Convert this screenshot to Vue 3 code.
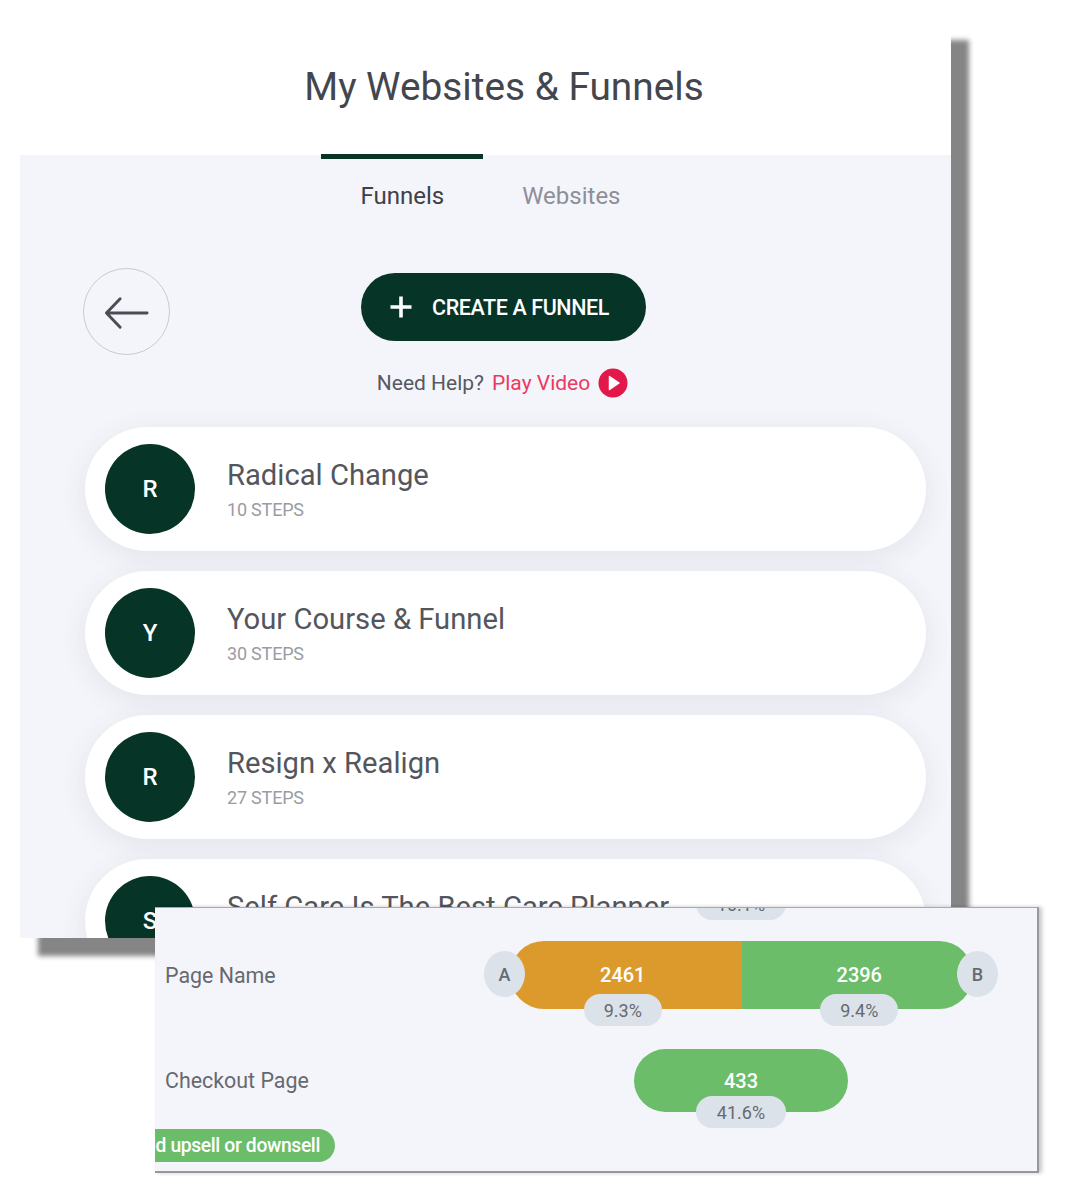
<script setup>
const funnels = [
  { letter: 'R', name: 'Radical Change', steps: '10 STEPS' },
  { letter: 'Y', name: 'Your Course & Funnel', steps: '30 STEPS' },
  { letter: 'R', name: 'Resign x Realign', steps: '27 STEPS' },
  { letter: 'S', name: 'Self Care Is The Best Care Planner', steps: '12 STEPS' }
]
</script>

<template>
  <div class="page">
    <section class="window">
      <header class="head"><h1>My Websites &amp; Funnels</h1></header>
      <div class="body">
        <nav class="tabs">
          <a class="tab active">Funnels</a>
          <a class="tab">Websites</a>
        </nav>
        <div class="toolbar">
          <button class="back" aria-label="Back">
            <svg width="45" height="34" viewBox="0 0 46 34" fill="none" stroke="#4a4d55" stroke-width="3" stroke-linecap="round" stroke-linejoin="round">
              <path d="M2.500 17H44M16.500 2.500L2.500 17L16.500 31.500" />
            </svg>
          </button>
          <button class="create">
            <svg width="24" height="24" viewBox="0 0 24 24" stroke="#fff" stroke-width="3.600" fill="none"><path d="M12 1.500V22.500M1.500 12H22.500" /></svg>
            <span>CREATE A FUNNEL</span>
          </button>
          <p class="help">
            <span>Need Help?</span>
            <a>Play Video</a>
            <svg width="30" height="30" viewBox="0 0 30 30"><circle cx="15" cy="15" r="14.500" fill="#e2174a" /><path d="M11.500 8.500L21 15L11.500 21.500Z" fill="#fff" stroke="#fff" stroke-width="1.500" stroke-linejoin="round" /></svg>
          </p>
        </div>
        <ul class="list">
          <li v-for="f in funnels" :key="f.name" class="row">
            <span class="avatar">{{ f.letter }}</span>
            <div class="info">
              <strong>{{ f.name }}</strong>
              <small>{{ f.steps }}</small>
            </div>
          </li>
        </ul>
      </div>
    </section>

    <section class="panel">
      <span class="badge clipped">10.1%</span>
      <div class="flow first">
        <span class="label lab-a">Page Name</span>
        <div class="split">
          <span class="side letter-a">A</span>
          <div class="part orange"><span class="num">2461</span><span class="badge under small">9.3%</span></div>
          <div class="part green"><span class="num">2396</span><span class="badge under small">9.4%</span></div>
          <span class="side letter-b">B</span>
        </div>
      </div>
      <div class="flow second">
        <span class="label lab-b">Checkout Page</span>
        <div class="single">433<span class="badge under">41.6%</span></div>
      </div>
      <div class="upsell"><span>Add upsell or downsell</span></div>
    </section>
  </div>
</template>

<style>
html, body { margin: 0; background: #fff; }
</style>

<style scoped>
.page { position: relative; height: 1200px; overflow: hidden; background: #fff; font-family: Roboto, "Liberation Sans", sans-serif; }
.window { box-sizing: border-box; width: 931px; height: 916px; margin: 22px 0 0 20px; background: #fff; box-shadow: 18px 18px 5px #858585; overflow: hidden; display: flex; flex-direction: column; }
.head { height: 133px; padding: 0 28px 0 65px; display: flex; align-items: center; justify-content: center; flex: none; }
.head h1 { margin: 0 0 3px; font-size: 38.800px; font-weight: 400; color: #43464d; line-height: 44px; white-space: nowrap; }
.body { flex: 1; background: #f4f5fa; padding: 0 25px 0 65px; min-height: 0; }
.tabs { display: flex; justify-content: center; padding-right: 30px; }
.tab { padding: 0 39px; height: 78px; box-sizing: border-box; font-size: 24px; line-height: 82px; color: #8d8f99; }
.tab.active { color: #3d4049; border-top: 5px solid #063427; line-height: 75px; margin-top: -1px; height: 79px; }
.toolbar { margin-top: 40px; padding-right: 4px; display: grid; grid-template-columns: 1fr auto 1fr; grid-template-rows: auto auto; justify-items: center; }
.back { grid-row: 1 / span 2; grid-column: 1; justify-self: start; align-self: start; width: 87px; height: 87px; margin-left: -2px; margin-top: -5px; padding: 3px 0 0; border: 1.500px solid #c9cacf; border-radius: 50%; background: transparent; display: flex; align-items: center; justify-content: center; }
.create { grid-column: 2; width: 285px; height: 68px; border: 0; border-radius: 34px; background: #063427; color: #fff; font: 500 21.500px Roboto, sans-serif; letter-spacing: -0.4px; display: flex; align-items: center; gap: 19px; padding: 0 0 0 28px; white-space: nowrap; }
.help { grid-column: 2; margin: 27px 0 0 -2px; display: flex; align-items: center; gap: 8px; font-size: 21px; color: #565962; height: 30px; white-space: nowrap; }
.help a { color: #e83a62; }
.list { list-style: none; margin: 29px 0 0; padding: 0; display: flex; flex-direction: column; gap: 20px; }
.row { height: 124px; flex: none; box-sizing: border-box; border-radius: 62px; background: #fff; box-shadow: 0 6px 28px rgba(60, 70, 100, .09); display: flex; align-items: center; padding-left: 20px; gap: 32px; }
.avatar { width: 90px; height: 90px; border-radius: 50%; background: #063427; color: #fff; font-size: 24px; font-weight: 500; display: flex; align-items: center; justify-content: center; flex: none; }
.info { display: flex; flex-direction: column; gap: 6px; }
.info strong { font-size: 29.200px; font-weight: 400; line-height: 36px; color: #53565d; }
.info small { font-size: 18px; line-height: 22px; color: #9a9ca3; letter-spacing: -0.2px; }

.panel { position: absolute; left: 155px; top: 907px; box-sizing: border-box; width: 884px; height: 266px; background: #f4f5fa; border-top: 1px solid #a9a9ad; border-bottom: 2px solid #98989b; border-right: 2px solid #98989b; box-shadow: 3px 0 4px rgba(0, 0, 0, .22); overflow: hidden; }
.badge { display: flex; align-items: center; justify-content: center; background: #dce2e9; color: #666a70; font-size: 18px; border-radius: 16px; height: 32px; box-sizing: border-box; }
.clipped { width: 90px; margin: -20px 0 0 541px; }
.flow { display: flex; align-items: center; }
.first { margin-top: 21px; }
.second { margin-top: 40px; }
.label { font-size: 21.400px; color: #66696f; padding-left: 10px; box-sizing: border-box; flex: none; }
.lab-a { width: 355px; }
.lab-b { width: 479px; }
.split { position: relative; width: 463px; height: 68px; display: flex; }
.part { position: relative; flex: 1; display: flex; align-items: center; justify-content: center; color: #fff; font-size: 20px; font-weight: 500; }
.orange { background: #dc9a2c; border-radius: 34px 0 0 34px; }
.green { background: #6bbd69; border-radius: 0 34px 34px 0; }
.orange .num { margin-right: 6px; }
.green .num { margin-left: 4px; }
.orange .under { left: calc(50% - 3px); }
.green .under { left: calc(50% + 2px); }
.side { position: absolute; top: 10px; width: 41px; height: 46px; border-radius: 50%; background: #dce2e9; color: #666a70; font-size: 18px; font-weight: 500; display: flex; align-items: center; justify-content: center; z-index: 1; }
.letter-a { left: -26px; }
.letter-b { right: -25px; }
.under { position: absolute; top: 47px; left: 50%; transform: translateX(-50%); width: 90px; font-weight: 400; }
.under.small { top: 53px; width: 78px; }
.single { position: relative; width: 214px; height: 63px; border-radius: 32px; background: #6bbd69; color: #fff; font-size: 20px; font-weight: 500; display: flex; align-items: center; justify-content: center; }
.upsell { margin-top: 17px; width: 180px; height: 33px; background: #6bbd69; border-radius: 0 17px 17px 0; color: #fff; font-size: 19.300px; font-weight: 500; letter-spacing: -0.35px; display: flex; align-items: center; justify-content: flex-end; padding-right: 15px; box-sizing: border-box; overflow: hidden; white-space: nowrap; }
.upsell span { flex: none; }
</style>
